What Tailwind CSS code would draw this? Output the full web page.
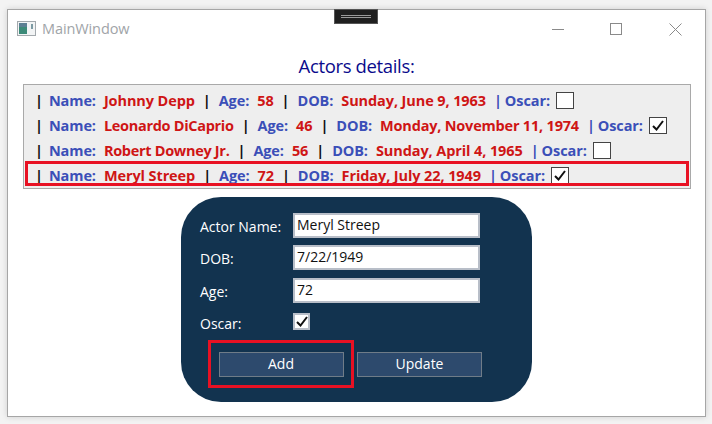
<!DOCTYPE html>
<html>
  <head>
    <meta charset="utf-8" />
    <title>MainWindow</title>
    <script src="https://cdn.jsdelivr.net/npm/@tailwindcss/browser@4"></script>
  </head>
  <body class="bg-[#f3f3f3] w-[712px] h-[424px] overflow-hidden font-['Open_Sans','Noto_Sans',sans-serif]">
    <div class="pt-[9px] pl-[7px]">
      <div class="relative w-[699px] h-[408px] bg-white border border-[#a6a6a6] shadow-[0_0_6px_rgba(0,0,0,0.15)]">
        <!-- debug toolbar pill -->
        <div class="absolute left-[326px] -top-px w-[44px] h-[15px] bg-[#1f1f1f] border border-[#555] flex flex-col items-center justify-center gap-[1px]">
          <div class="w-[30px] h-px bg-[#9a9a9a]"></div>
          <div class="w-[30px] h-px bg-[#9a9a9a]"></div>
        </div>

        <!-- title bar -->
        <div class="h-[38px] flex items-center justify-between">
          <div class="flex items-center pl-[9px] gap-[6px]">
            <svg width="19" height="16" viewBox="0 0 19 16">
              <rect x="0.5" y="0.5" width="18" height="14" fill="#f2f4f5" stroke="#a3a9ad" />
              <rect x="2" y="3" width="8" height="10" fill="#3c8a78" />
              <rect x="2" y="2" width="8" height="4" fill="#5c7f93" />
              <rect x="14" y="3" width="2" height="5" fill="#7c9aa3" />
            </svg>
            <span class="text-[14.5px] text-[#a0a4a8] tracking-[-0.1px]">MainWindow</span>
          </div>
          <div class="flex items-center pr-[23px]">
            <div class="w-[12px] h-px bg-[#8a8a8a]"></div>
            <div class="ml-[46px] w-[12px] h-[12px] border border-[#8a8a8a]"></div>
            <svg class="ml-[47px]" width="13" height="13" viewBox="0 0 13 13" stroke="#8a8a8a" stroke-width="1" fill="none">
              <path d="M0.5 0.5 12.5 12.5M12.5 0.5 0.5 12.5" />
            </svg>
          </div>
        </div>

        <div class="h-[36px] pt-[6px] text-center text-[18.5px] leading-[24px] text-[#0a0a8c] tracking-[-0.35px]">Actors details:</div>

        <!-- actors list -->
        <div class="ml-[15px] w-[668px] h-[105px] bg-[#eeeeee] border border-[#a9a9a9] pt-[3px] text-[14.5px] font-bold tracking-[-0.1px]">
          <div class="h-[25px] pl-[11px] flex items-center">
            <span class="text-[#111]">|</span><span class="text-[#3b4fb8] ml-[6px]">Name:</span><span class="text-[#cf1515] ml-[8px]">Johnny Depp</span><span class="text-[#111] ml-[8px]">|</span><span class="text-[#3b4fb8] ml-[8px]">Age:</span><span class="text-[#cf1515] ml-[8px]">58</span><span class="text-[#111] ml-[8px]">|</span><span class="text-[#3b4fb8] ml-[8px]">DOB:</span><span class="text-[#cf1515] ml-[8px]">Sunday, June 9, 1963</span><span class="text-[#3b4fb8] ml-[8px]">|</span><span class="text-[#3b4fb8] ml-[3px]">Oscar:</span>
            <div class="ml-[6px] w-[18px] h-[17px] bg-white border border-[#444]"></div>
          </div>
          <div class="h-[25px] pl-[11px] flex items-center">
            <span class="text-[#111]">|</span><span class="text-[#3b4fb8] ml-[6px]">Name:</span><span class="text-[#cf1515] ml-[8px] tracking-[-0.3px]">Leonardo DiCaprio</span><span class="text-[#111] ml-[8px]">|</span><span class="text-[#3b4fb8] ml-[8px]">Age:</span><span class="text-[#cf1515] ml-[8px]">46</span><span class="text-[#111] ml-[8px]">|</span><span class="text-[#3b4fb8] ml-[8px]">DOB:</span><span class="text-[#cf1515] ml-[8px] tracking-[-0.2px]">Monday, November 11, 1974</span><span class="text-[#3b4fb8] ml-[8px]">|</span><span class="text-[#3b4fb8] ml-[3px]">Oscar:</span>
            <div class="ml-[6px] w-[18px] h-[17px] bg-white border border-[#444] flex items-center justify-center">
              <svg width="12" height="11" viewBox="0 0 12 11" fill="none" stroke="#111" stroke-width="2"><path d="M1 6 4.5 9.5 11 1" /></svg>
            </div>
          </div>
          <div class="h-[25px] pl-[11px] flex items-center">
            <span class="text-[#111]">|</span><span class="text-[#3b4fb8] ml-[6px]">Name:</span><span class="text-[#cf1515] ml-[8px] tracking-[-0.3px]">Robert Downey Jr.</span><span class="text-[#111] ml-[8px]">|</span><span class="text-[#3b4fb8] ml-[8px]">Age:</span><span class="text-[#cf1515] ml-[8px]">56</span><span class="text-[#111] ml-[8px]">|</span><span class="text-[#3b4fb8] ml-[8px]">DOB:</span><span class="text-[#cf1515] ml-[8px]">Sunday, April 4, 1965</span><span class="text-[#3b4fb8] ml-[8px]">|</span><span class="text-[#3b4fb8] ml-[3px]">Oscar:</span>
            <div class="ml-[6px] w-[18px] h-[17px] bg-white border border-[#444]"></div>
          </div>
          <div class="relative h-[25px] pl-[11px] flex items-center">
            <div class="absolute left-[1px] -top-[2px] w-[664px] h-[25px] border-[3px] border-[#e81123]"></div>
            <span class="text-[#111]">|</span><span class="text-[#3b4fb8] ml-[6px]">Name:</span><span class="text-[#cf1515] ml-[8px]">Meryl Streep</span><span class="text-[#111] ml-[8px]">|</span><span class="text-[#3b4fb8] ml-[8px]">Age:</span><span class="text-[#cf1515] ml-[8px]">72</span><span class="text-[#111] ml-[8px]">|</span><span class="text-[#3b4fb8] ml-[8px]">DOB:</span><span class="text-[#cf1515] ml-[8px]">Friday, July 22, 1949</span><span class="text-[#3b4fb8] ml-[8px]">|</span><span class="text-[#3b4fb8] ml-[3px]">Oscar:</span>
            <div class="ml-[6px] w-[18px] h-[17px] bg-white border border-[#444] flex items-center justify-center">
              <svg width="12" height="11" viewBox="0 0 12 11" fill="none" stroke="#111" stroke-width="2"><path d="M1 6 4.5 9.5 11 1" /></svg>
            </div>
          </div>
        </div>

        <!-- actor form -->
        <div class="mt-[8px] ml-[173px] w-[351px] h-[205px] bg-[#12334f] rounded-[40px] pt-[16px] pl-[19px] text-white text-[14px]">
          <div class="flex flex-col">
            <div class="flex items-center h-[25px]">
              <span class="w-[93px] pt-[2px]">Actor Name:</span>
              <div class="w-[187px] h-[25px] bg-white border-2 border-[#b8bec8] pl-[2px] text-[#111] leading-[19px]">Meryl Streep</div>
            </div>
            <div class="flex items-center h-[25px] mt-[7px]">
              <span class="w-[93px] pt-[2px]">DOB:</span>
              <div class="w-[187px] h-[25px] bg-white border-2 border-[#b8bec8] pl-[2px] text-[#111] leading-[19px]">7/22/1949</div>
            </div>
            <div class="flex items-center h-[25px] mt-[8px]">
              <span class="w-[93px] pt-[2px]">Age:</span>
              <div class="w-[187px] h-[25px] bg-white border-2 border-[#b8bec8] pl-[2px] text-[#111] leading-[19px]">72</div>
            </div>
            <div class="flex items-center h-[17px] mt-[10px]">
              <span class="w-[93px] pt-[4px]">Oscar:</span>
              <div class="w-[17px] h-[17px] bg-white border-2 border-[#b8bec8] flex items-center justify-center">
                <svg width="12" height="11" viewBox="0 0 12 11" fill="none" stroke="#111" stroke-width="2"><path d="M1 6 4.5 9.5 11 1" /></svg>
              </div>
            </div>
          </div>
          <div class="mt-[10px] ml-[8px] flex items-center">
            <div class="w-[146px] h-[48px] border-[3px] border-[#e81123] flex items-center justify-center">
              <div class="w-[125px] h-[25px] bg-[#2d4a6d] border border-[#6f7c88] text-center leading-[22px]">Add</div>
            </div>
            <div class="ml-[3px] w-[125px] h-[25px] bg-[#2d4a6d] border border-[#6f7c88] text-center leading-[22px]">Update</div>
          </div>
        </div>
      </div>
    </div>
  </body>
</html>
